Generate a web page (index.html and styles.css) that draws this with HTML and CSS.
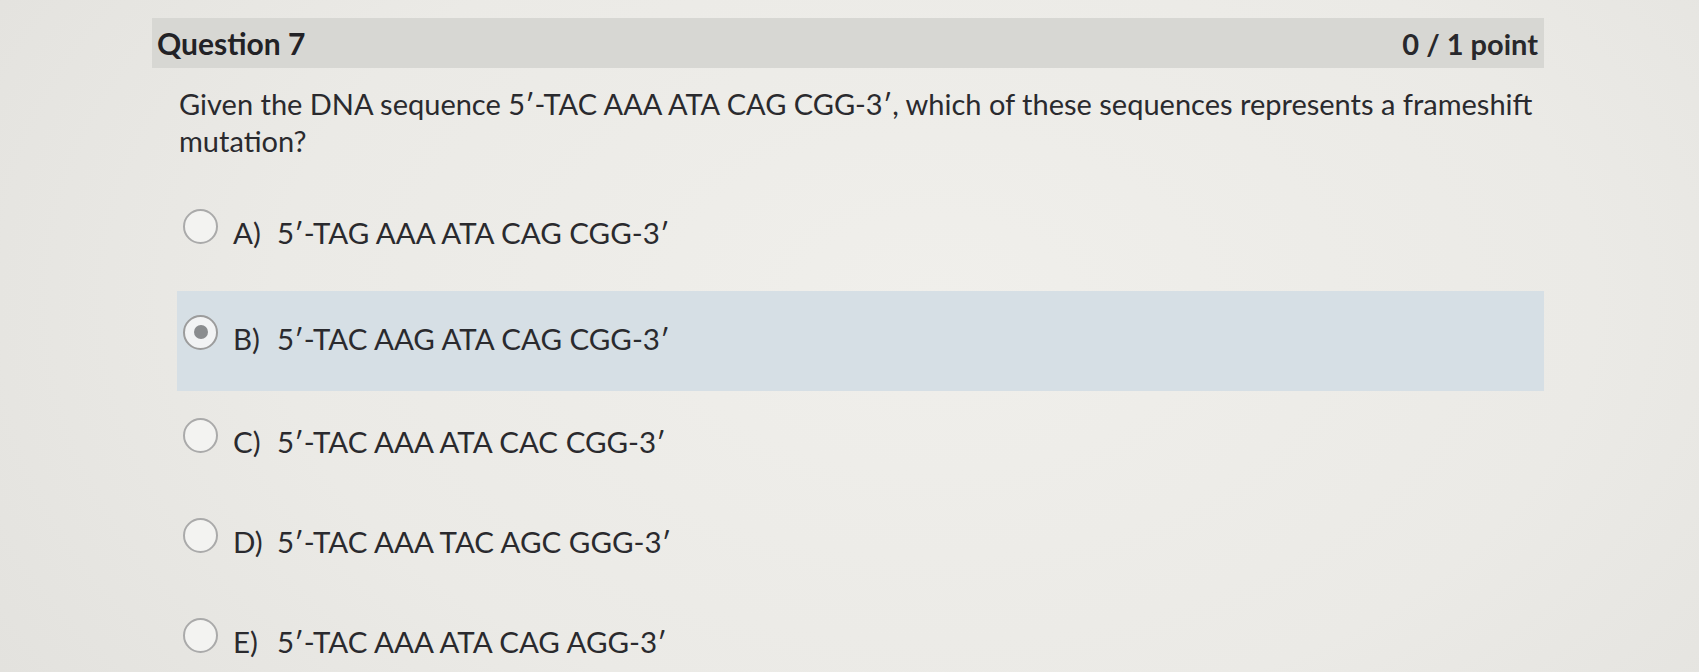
FILE: index.html
```html
<!DOCTYPE html>
<html lang="en">
<head>
<meta charset="utf-8">
<title>Question 7</title>
<link rel="stylesheet" href="styles.css">
</head>
<body>
<div class="question">
  <div class="q-header">
    <span class="q-name">Question 7</span>
    <span class="q-points">0 / 1 point</span>
  </div>
  <div class="q-text">Given the DNA sequence 5′-TAC AAA ATA CAG CGG-3′, which of these sequences represents a frameshift mutation?</div>
  <div class="answers">
    <div class="answer">
      <span class="radio"></span>
      <span class="letter">A)</span>
      <span class="seq">5′-TAG AAA ATA CAG CGG-3′</span>
    </div>
    <div class="answer selected">
      <span class="radio checked"></span>
      <span class="letter">B)</span>
      <span class="seq">5′-TAC AAG ATA CAG CGG-3′</span>
    </div>
    <div class="answer">
      <span class="radio"></span>
      <span class="letter">C)</span>
      <span class="seq">5′-TAC AAA ATA CAC CGG-3′</span>
    </div>
    <div class="answer">
      <span class="radio"></span>
      <span class="letter">D)</span>
      <span class="seq">5′-TAC AAA TAC AGC GGG-3′</span>
    </div>
    <div class="answer">
      <span class="radio"></span>
      <span class="letter">E)</span>
      <span class="seq">5′-TAC AAA ATA CAG AGG-3′</span>
    </div>
  </div>
</div>
</body>
</html>
```

FILE: styles.css
```css
html, body {
  margin: 0;
  padding: 0;
}
body {
  width: 1699px;
  height: 672px;
  overflow: hidden;
  font-family: Lato, "Open Sans", "Liberation Sans", sans-serif;
  color: #2a2a2e;
  background: radial-gradient(ellipse 1100px 700px at 55% 45%, #f0efeb 0%, #ebeae6 60%, #e3e2de 100%);
}
.question {
  margin-left: 152px;
  width: 1392px;
  padding-top: 18px;
}
.q-header {
  height: 50px;
  display: flex;
  justify-content: space-between;
  align-items: center;
  padding: 0 6px 0 5px;
  background: #d7d7d3;
}
.q-name {
  font-size: 30px;
  font-weight: 700;
  color: #222226;
}
.q-points {
  font-size: 29px;
  font-weight: 700;
  color: #28282c;
}
.q-text {
  margin-top: 17px;
  padding-left: 27px;
  font-size: 29px;
  line-height: 37px;
}
.answers {
  margin-top: 24px;
  margin-left: 25px;
}
.answer {
  box-sizing: border-box;
  height: 100px;
  display: flex;
  align-items: center;
  padding-left: 6px;
  font-size: 29.5px;
}
.answer:first-child {
  height: 108px;
  padding-bottom: 10px;
}
.answer.selected {
  background: #d6dfe5;
  height: 100px;
  padding-bottom: 6px;
}
.radio {
  width: 31px;
  height: 31px;
  border: 2px solid #aaaaaa;
  border-radius: 50%;
  background: #f3f3f1;
  margin-bottom: 12px;
  margin-right: 15px;
  display: flex;
  align-items: center;
  justify-content: center;
  flex: none;
}
.radio.checked {
  border-color: #9c9c9c;
  background: #f2f3f4;
}
.radio.checked::after {
  content: "";
  width: 14px;
  height: 14px;
  border-radius: 50%;
  background: #8a8c8e;
}
.letter {
  width: 44px;
}
```
